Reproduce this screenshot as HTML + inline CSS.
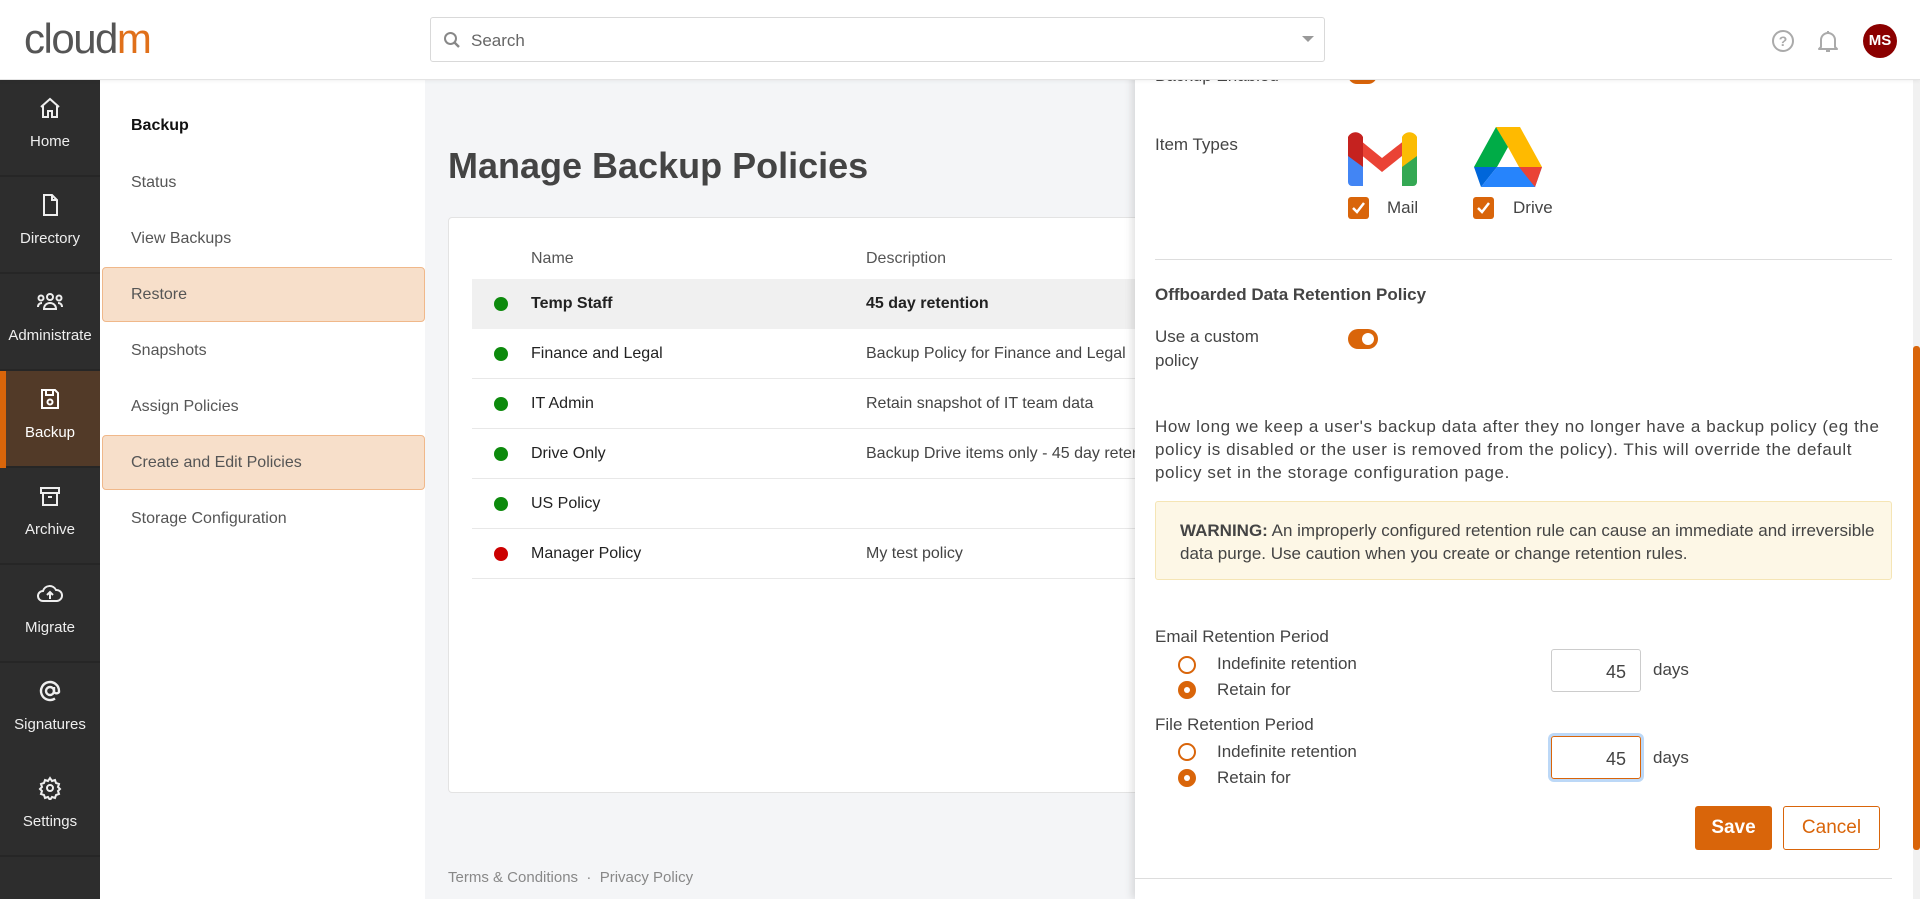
<!DOCTYPE html>
<html><head><meta charset="utf-8"><style>
*{box-sizing:border-box;margin:0;padding:0}
body{width:1920px;height:899px;overflow:hidden;font-family:"Liberation Sans",Arial,sans-serif;background:#f4f5f7;position:relative;color:#333}
.abs{position:absolute}
#hdr{left:0;top:0;width:1920px;height:80px;background:#fff;border-bottom:1px solid #e4e4e4;box-shadow:0 1px 4px rgba(0,0,0,.06);z-index:5}
#side{left:0;top:80px;width:100px;height:819px;background:#2d2d2d}
.si{position:absolute;left:0;width:100px;height:97px;border-bottom:2px solid #262626;color:#eee;font-size:15px;text-align:center}
.si svg{position:absolute;left:38px;top:16px}
.si span{position:absolute;left:0;right:0;top:53px}
#sub{left:100px;top:80px;width:325px;height:819px;background:#fff}
.sn{position:absolute;left:31px;font-size:16px;color:#555}
.hl{position:absolute;left:2px;width:323px;height:55px;background:#f7dfca;border:1px solid #f0b88a;border-radius:4px}
#card{left:448px;top:217px;width:800px;height:576px;background:#fff;border:1px solid #e3e3e3;border-radius:4px}
.row{position:absolute;left:23px;width:760px;height:50px;border-bottom:1px solid #e8e8e8;font-size:16px;color:#222}
.row .d{position:absolute;left:22px;top:18px;width:14px;height:14px;border-radius:50%;background:#0d8a0d}
.row .n{position:absolute;left:59px;top:16px}
.row .ds{position:absolute;left:394px;top:16px;color:#444;white-space:nowrap}
#panel{left:1135px;top:0;width:785px;height:899px;background:#fff;box-shadow:-3px 0 8px rgba(0,0,0,.12);z-index:3}
.pt{position:absolute;font-size:17px;color:#444}
.cb{position:absolute;width:21px;height:22px;background:#d9650a;border-radius:3px}
.rad{position:absolute;left:43px;width:18px;height:18px;border-radius:50%;border:2px solid #d9650a;background:#fff}
.rad.on{background:#d9650a}
.rad.on:after{content:"";position:absolute;left:4px;top:4px;width:6px;height:6px;border-radius:50%;background:#fff}
.inp{position:absolute;left:416px;width:90px;height:43px;border:1px solid #ccc;border-radius:3px;font-size:18px;text-align:right;padding:12px 14px 0 0;color:#444}
</style></head><body>
<div id="hdr" class="abs">
 <div class="abs" style="left:24px;top:14px;font-size:42px;letter-spacing:-1.5px;font-weight:400;color:#555;line-height:50px">cloud<span style="color:#e0701a">m</span></div>
 <div class="abs" style="left:430px;top:17px;width:895px;height:45px;border:1px solid #d9d9d9;border-radius:3px">
  <svg class="abs" style="left:12px;top:13px" width="18" height="18" viewBox="0 0 18 18"><circle cx="7.5" cy="7.5" r="5.5" fill="none" stroke="#888" stroke-width="2"/><path d="M11.5 11.5l4.5 4.5" stroke="#888" stroke-width="2.4"/></svg>
  <span class="abs" style="left:40px;top:13px;font-size:17px;color:#666">Search</span>
  <span class="abs" style="right:10px;top:18px;width:0;height:0;border-left:6px solid transparent;border-right:6px solid transparent;border-top:6px solid #999"></span>
 </div>
 <svg class="abs" style="left:1771px;top:29px" width="24" height="24" viewBox="0 0 24 24"><circle cx="12" cy="12" r="10" fill="none" stroke="#aaa" stroke-width="2"/><text x="12" y="17" font-size="14" font-weight="bold" fill="#aaa" text-anchor="middle" font-family="Liberation Sans">?</text></svg>
 <svg class="abs" style="left:1816px;top:28px" width="24" height="26" viewBox="0 0 24 26"><path d="M5 19V12a7 7 0 0 1 14 0v7l2 2H3z" fill="none" stroke="#aaa" stroke-width="2" stroke-linejoin="round"/><path d="M10 23h4" stroke="#aaa" stroke-width="2"/><path d="M12 3v2" stroke="#aaa" stroke-width="2"/></svg>
 <div class="abs" style="left:1863px;top:24px;width:34px;height:34px;border-radius:50%;background:#8b0000;color:#fff;font-weight:bold;font-size:15px;text-align:center;line-height:34px">MS</div>
</div>

<div id="side" class="abs">
 <div class="si" style="top:0"><svg width="24" height="24" viewBox="0 0 24 24" fill="none" stroke="#eee" stroke-width="2"><path d="M3 11L12 3l9 8M5 10v11h5v-6h4v6h5V10"/></svg><span>Home</span></div>
 <div class="si" style="top:97px"><svg width="24" height="24" viewBox="0 0 24 24" fill="none" stroke="#eee" stroke-width="2"><path d="M6 2h8l5 5v15H6zM14 2v5h5"/></svg><span>Directory</span></div>
 <div class="si" style="top:194px"><svg width="28" height="24" viewBox="0 0 28 24" fill="none" stroke="#eee" stroke-width="2" style="left:36px"><circle cx="14" cy="7" r="3"/><circle cx="5" cy="8" r="2.5"/><circle cx="23" cy="8" r="2.5"/><path d="M8 19c0-4 3-6 6-6s6 2 6 6zM2 17c0-3 2-4 4-4M26 17c0-3-2-4-4-4"/></svg><span>Administrate</span></div>
 <div class="si" style="top:291px;background:#523a28"><div style="position:absolute;left:0;top:0;width:6px;height:97px;background:#d9650a"></div><svg width="24" height="24" viewBox="0 0 24 24" fill="none" stroke="#fff" stroke-width="2"><path d="M4 3h13l3 3v15H4zM8 3v5h7V3"/><circle cx="12" cy="15" r="2.5"/></svg><span style="color:#fff">Backup</span></div>
 <div class="si" style="top:388px"><svg width="24" height="24" viewBox="0 0 24 24" fill="none" stroke="#eee" stroke-width="2"><path d="M3 4h18v5H3zM5 9v12h14V9M10 13h4"/></svg><span>Archive</span></div>
 <div class="si" style="top:486px"><svg width="28" height="24" viewBox="0 0 28 24" fill="none" stroke="#eee" stroke-width="2" style="left:36px"><path d="M7 19a5 5 0 0 1 0-10 7 7 0 0 1 13-1 5.5 5.5 0 0 1 1 11z"/><path d="M14 17v-6M11 13l3-3 3 3"/></svg><span>Migrate</span></div>
 <div class="si" style="top:583px;border-bottom:none"><svg width="24" height="24" viewBox="0 0 24 24" fill="none" stroke="#eee" stroke-width="2.4"><circle cx="12" cy="12" r="4"/><path d="M16 8v5a3 3 0 0 0 5 0v-1a9 9 0 1 0-4 7.5"/></svg><span>Signatures</span></div>
 <div class="si" style="top:680px"><svg width="24" height="24" viewBox="0 0 24 24" fill="none" stroke="#eee" stroke-width="2"><circle cx="12" cy="12" r="3"/><path d="M12 2l2 3 3-1 1 3 3 1-1 3 2 2-2 2 1 3-3 1-1 3-3-1-2 3-2-3-3 1-1-3-3-1 1-3-2-2 2-2-1-3 3-1 1-3 3 1z"/></svg><span>Settings</span></div>
</div>

<div id="sub" class="abs">
 <div class="hl" style="top:187px"></div>
 <div class="hl" style="top:355px"></div>
 <div class="sn" style="top:37px;color:#111;font-weight:bold">Backup</div>
 <div class="sn" style="top:94px">Status</div>
 <div class="sn" style="top:150px">View Backups</div>
 <div class="sn" style="top:206px">Restore</div>
 <div class="sn" style="top:262px">Snapshots</div>
 <div class="sn" style="top:318px">Assign Policies</div>
 <div class="sn" style="top:374px">Create and Edit Policies</div>
 <div class="sn" style="top:430px">Storage Configuration</div>
</div>

<div class="abs" style="left:448px;top:145px;font-size:36px;font-weight:bold;color:#444">Manage Backup Policies</div>
<div id="card" class="abs">
 <div class="abs" style="left:82px;top:32px;font-size:16px;color:#555">Name</div>
 <div class="abs" style="left:417px;top:32px;font-size:16px;color:#555">Description</div>
 <div class="row" style="top:61px;background:#f0f0f0;border:none"><div class="d"></div><div class="n" style="font-weight:bold">Temp Staff</div><div class="ds" style="font-weight:bold;color:#222">45 day retention</div></div>
 <div class="row" style="top:111px"><div class="d"></div><div class="n">Finance and Legal</div><div class="ds">Backup Policy for Finance and Legal</div></div>
 <div class="row" style="top:161px"><div class="d"></div><div class="n">IT Admin</div><div class="ds">Retain snapshot of IT team data</div></div>
 <div class="row" style="top:211px"><div class="d"></div><div class="n">Drive Only</div><div class="ds">Backup Drive items only - 45 day retention</div></div>
 <div class="row" style="top:261px"><div class="d"></div><div class="n">US Policy</div></div>
 <div class="row" style="top:311px"><div class="d" style="background:#c00"></div><div class="n">Manager Policy</div><div class="ds">My test policy</div></div>
</div>
<div class="abs" style="left:448px;top:869px;font-size:15px;color:#888">Terms &amp; Conditions &nbsp;·&nbsp; Privacy Policy</div>

<div id="panel" class="abs">
 <div class="pt" style="left:20px;top:66px">Backup Enabled</div>
 <div class="abs" style="left:213px;top:66px;width:29px;height:18px;border-radius:9px;background:#d9650a"></div>
 <div class="pt" style="left:20px;top:135px">Item Types</div>
 <svg class="abs" style="left:213px;top:132px" width="69" height="54" viewBox="0 0 69 54"><path d="M0 12v38a4 4 0 0 0 4 4h11V24z" fill="#4285f4"/><path d="M54 24v30h11a4 4 0 0 0 4-4V12z" fill="#34a853"/><path d="M0 12L34 40 69 12 62 4 34 26 7 4z" fill="#ea4335"/><path d="M0 12v12l15 11V5A8 8 0 0 0 0 12z" fill="#c5221f"/><path d="M54 5v30l15-11V12A8 8 0 0 0 54 5z" fill="#fbbc04"/></svg>
 <svg class="abs" style="left:339px;top:127px" width="68" height="60" viewBox="0 0 68 60"><path d="M22 0h24l-12 20z" fill="#00832d"/><path d="M22 0L0 40h23L34 20z" fill="#00ac47"/><path d="M46 0l22 40H45L34 20 22 0z" fill="#ffba00"/><path d="M0 40l7 20 16-20z" fill="#0066da"/><path d="M23 40h45l-7 20H7z" fill="#2684fc"/><path d="M45 40h23l-7 20z" fill="#ea4335"/></svg>
 <div class="cb" style="left:213px;top:197px"><svg width="21" height="22" viewBox="0 0 21 22"><path d="M5 11l4 4 7-9" fill="none" stroke="#fff" stroke-width="2.5"/></svg></div>
 <div class="pt" style="left:252px;top:198px">Mail</div>
 <div class="cb" style="left:338px;top:197px"><svg width="21" height="22" viewBox="0 0 21 22"><path d="M5 11l4 4 7-9" fill="none" stroke="#fff" stroke-width="2.5"/></svg></div>
 <div class="pt" style="left:378px;top:198px">Drive</div>
 <div class="abs" style="left:20px;top:259px;width:737px;height:1px;background:#ddd"></div>
 <div class="pt" style="left:20px;top:285px;font-weight:bold">Offboarded Data Retention Policy</div>
 <div class="pt" style="left:20px;top:325px;line-height:24px">Use a custom<br>policy</div>
 <div class="abs" style="left:213px;top:329px;width:30px;height:20px;border-radius:10px;background:#d9650a"><div style="position:absolute;right:4px;top:4px;width:12px;height:12px;border-radius:50%;background:#fff"></div></div>
 <div class="pt" style="left:20px;top:415px;width:730px;line-height:23px;letter-spacing:0.6px">How long we keep a user's backup data after they no longer have a backup policy (eg the policy is disabled or the user is removed from the policy). This will override the default policy set in the storage configuration page.</div>
 <div class="abs" style="left:20px;top:501px;width:737px;height:79px;background:#fdf7e6;border:1px solid #f5e5b5;border-radius:3px;padding:17px 6px 0 24px;font-size:17px;line-height:23px;color:#444"><b>WARNING:</b> An improperly configured retention rule can cause an immediate and irreversible data purge. Use caution when you create or change retention rules.</div>
 <div class="pt" style="left:20px;top:627px">Email Retention Period</div>
 <div class="rad" style="top:656px"></div><div class="pt" style="left:82px;top:654px">Indefinite retention</div>
 <div class="rad on" style="top:681px"></div><div class="pt" style="left:82px;top:680px">Retain for</div>
 <div class="inp" style="top:649px">45</div><div class="pt" style="left:518px;top:660px">days</div>
 <div class="pt" style="left:20px;top:715px">File Retention Period</div>
 <div class="rad" style="top:743px"></div><div class="pt" style="left:82px;top:742px">Indefinite retention</div>
 <div class="rad on" style="top:769px"></div><div class="pt" style="left:82px;top:768px">Retain for</div>
 <div class="inp" style="top:736px;border:1.5px solid #d9650a;box-shadow:0 0 0 3px #bcd8f7">45</div><div class="pt" style="left:518px;top:748px">days</div>
 <div class="abs" style="left:560px;top:806px;width:77px;height:44px;background:#d9650a;border-radius:3px;color:#fff;font-weight:bold;font-size:19px;text-align:center;line-height:44px">Save</div>
 <div class="abs" style="left:648px;top:806px;width:97px;height:44px;border:1.5px solid #d9650a;border-radius:3px;color:#d9650a;font-size:19px;text-align:center;line-height:41px">Cancel</div>
 <div class="abs" style="left:0;top:878px;width:757px;height:1px;background:#ddd"></div>
 <div class="abs" style="left:778px;top:80px;width:7px;height:819px;background:#f1f1f1"></div>
 <div class="abs" style="left:778px;top:346px;width:7px;height:504px;background:#d9650a;border-radius:3px"></div>
</div>
</body></html>
